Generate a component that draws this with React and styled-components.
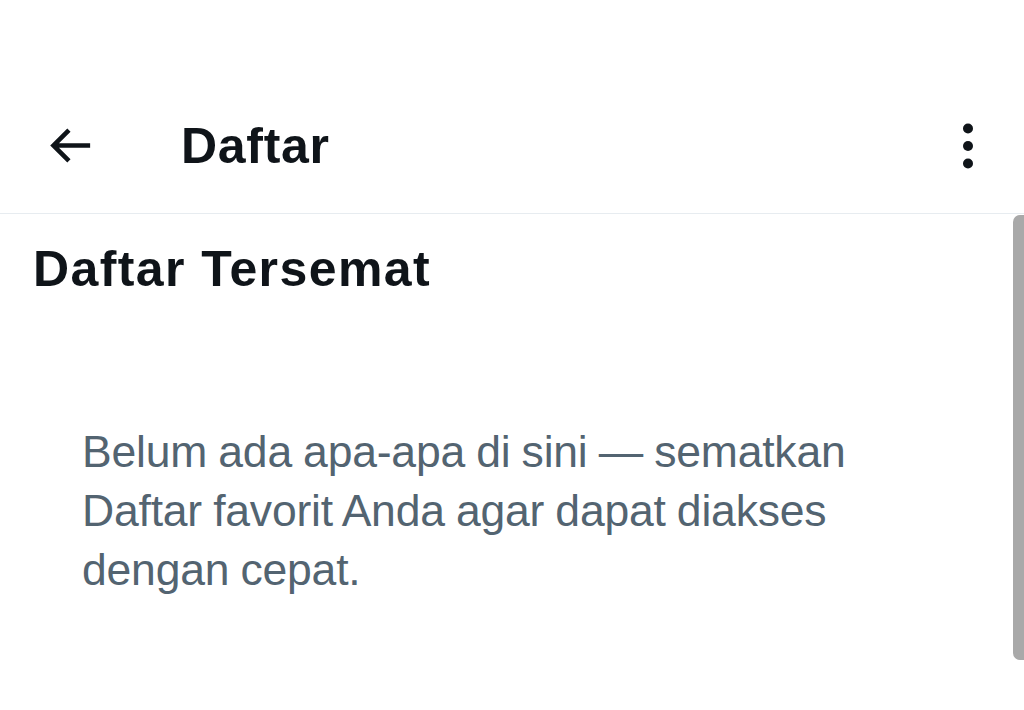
import React from 'react'
import styled, { createGlobalStyle } from 'styled-components'

const GlobalStyle = createGlobalStyle`
  html, body {
    margin: 0;
    padding: 0;
    background: #ffffff;
  }
  body {
    font-family: 'Liberation Sans', Arial, sans-serif;
    color: #0f1419;
  }
`

const Screen = styled.div`
  width: 1024px;
  height: 710px;
  overflow: hidden;
  background: #ffffff;
  display: flex;
  flex-direction: column;
`

const Header = styled.header`
  height: 136px;
  margin-top: 78px;
  display: flex;
  align-items: center;
  padding: 0 50px 0 42px;
  border-bottom: 1px solid #e7ecf0;
  box-sizing: border-box;
`

const IconButton = styled.button`
  border: 0;
  background: none;
  padding: 0;
  display: flex;
  align-items: center;
  justify-content: center;
  color: #0f1419;
  cursor: pointer;
  margin-left: ${p => (p.$right ? 'auto' : '0')};
`

const Title = styled.h1`
  margin: 0 0 0 84px;
  font-size: 50px;
  line-height: 60px;
  font-weight: 700;
  letter-spacing: 0.7px;
  color: #0f1419;
`

const Body = styled.main`
  position: relative;
  flex: 1;
`

const SectionHeading = styled.h2`
  margin: 25px 0 0 33px;
  font-size: 50px;
  line-height: 60px;
  font-weight: 700;
  letter-spacing: 1.4px;
  color: #0f1419;
`

const EmptyText = styled.p`
  margin: 123px 0 0 82px;
  max-width: 860px;
  font-size: 44.5px;
  line-height: 59px;
  letter-spacing: -0.2px;
  word-spacing: -1px;
  color: #536471;
`

const ScrollThumb = styled.div`
  position: absolute;
  top: 1px;
  right: 0;
  width: 11px;
  height: 445px;
  background: #a9a9a9;
  border-radius: 7px 0 0 7px;
`

const BackIcon = () => (
  <svg width="55" height="55" viewBox="0 0 24 24" fill="currentColor">
    <path d="M7.414 13l5.043 5.04-1.414 1.42L3.586 12l7.457-7.46 1.414 1.42L7.414 11H21v2H7.414z" />
  </svg>
)

const MoreIcon = () => (
  <svg width="12" height="48" viewBox="0 0 12 48" fill="currentColor">
    <circle cx="6" cy="6.5" r="5" />
    <circle cx="6" cy="24" r="5" />
    <circle cx="6" cy="41.5" r="5" />
  </svg>
)

const App = () => {
  return (
    <>
      <GlobalStyle />
      <Screen>
        <Header>
          <IconButton aria-label="Kembali">
            <BackIcon />
          </IconButton>
          <Title>Daftar</Title>
          <IconButton $right aria-label="Lainnya">
            <MoreIcon />
          </IconButton>
        </Header>
        <Body>
          <SectionHeading>Daftar Tersemat</SectionHeading>
          <EmptyText>
            Belum ada apa-apa di sini — sematkan Daftar favorit Anda agar dapat diakses dengan cepat.
          </EmptyText>
          <ScrollThumb />
        </Body>
      </Screen>
    </>
  )
}

export default App
